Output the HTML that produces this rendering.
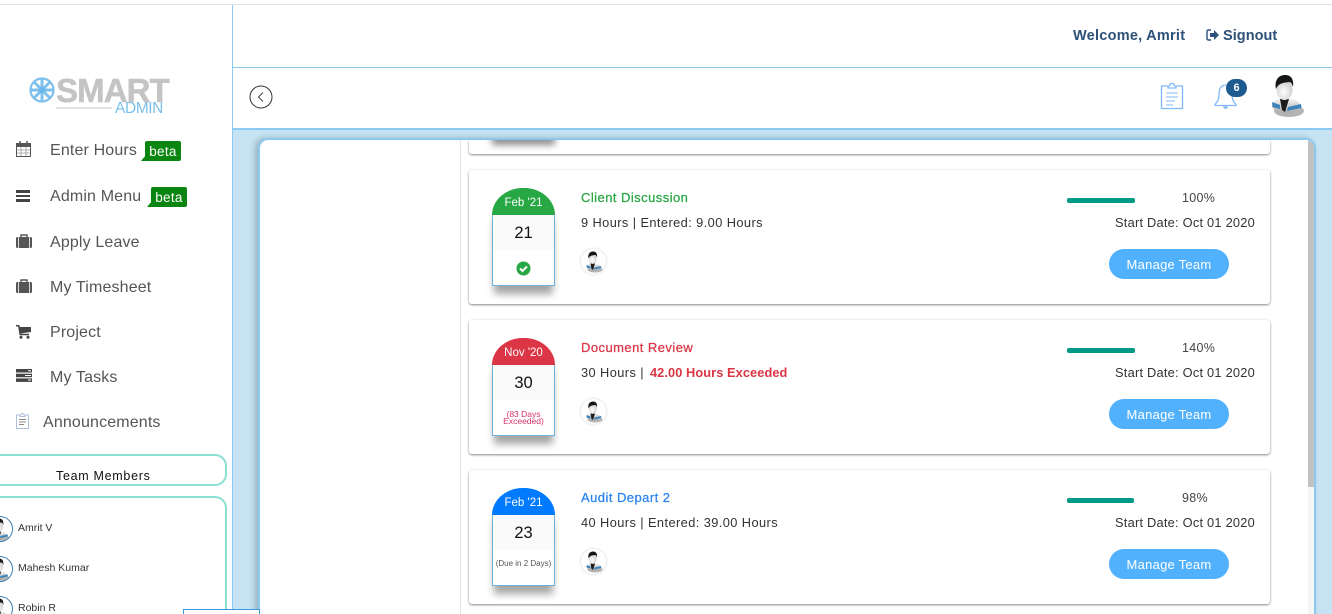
<!DOCTYPE html>
<html style="overflow:hidden"><head><meta charset="utf-8"><style>
html,body{margin:0;padding:0;background:#fff}
body{width:1332px;height:614px;overflow:hidden;position:relative;font-family:"Liberation Sans","DejaVu Sans",sans-serif;color:#333}
#w{position:absolute;left:0;top:0;width:1332px;height:614px;overflow:hidden}
.a,.t{position:absolute}
.t{white-space:nowrap;line-height:20px}
.m{font-size:16px;color:#555;letter-spacing:.15px}
.beta{position:absolute;background:#0a850f;color:#fff;font-size:13.500px;height:20px;line-height:21px;width:36px;box-sizing:border-box;border-radius:2px;text-align:center;letter-spacing:.3px}
.beta:before{content:"";position:absolute;left:-4px;bottom:0;border-style:solid;border-width:0 0 6px 5px;border-color:transparent transparent #0a850f transparent}
.card{position:absolute;left:469px;width:801px;height:134px;background:#fff;border-radius:3px;box-shadow:0 1px 2px rgba(0,0,0,.45),0 0 3px rgba(0,0,0,.06)}
.cal{position:absolute;left:23px;top:18px;width:63px;height:98px;background:#fff;border:1px solid #6db0dc;box-sizing:border-box;border-radius:31px 31px 0 0;box-shadow:0 10px 8px -2px rgba(0,0,0,.36)}
.cal .h{position:absolute;left:-1px;top:-1px;width:63px;height:27px;border-radius:31px 31px 0 0/27px 27px 0 0;color:#fff;font-size:11.500px;text-align:center;line-height:27px;padding-top:2px;box-sizing:border-box}
.cal .d{position:absolute;left:0;top:26px;width:61px;height:35px;background:#fafafa;text-align:center;font-size:16.500px;line-height:37px;color:#111}
.title{left:112px;top:18px;font-size:13px;letter-spacing:.45px;-webkit-text-stroke:.25px}
.sub{left:112px;top:43px;font-size:12.800px;color:#333;letter-spacing:.42px}
.bar{position:absolute;left:598px;top:28px;height:5px;background:#009a86;border-radius:2px}
.pct{left:713px;top:18px;font-size:12.500px;color:#444;letter-spacing:.3px}
.sd{right:15px;top:43px;font-size:12.800px;color:#333;letter-spacing:.24px}
.btn{position:absolute;left:640px;top:79px;width:120px;height:30px;border-radius:15px;background:#52b1fd;color:#fff;font-size:13px;text-align:center;line-height:31px;letter-spacing:.25px}
.av{position:absolute;left:112px;top:79px;width:25px;height:25px;border-radius:50%;background:#fff;box-shadow:0 0 3px rgba(0,0,0,.18)}
</style></head><body>
<svg width="0" height="0" style="position:absolute"><defs>
<linearGradient id="gb" x1="0" y1="0" x2="0" y2="1"><stop offset="0" stop-color="#fafafa"/><stop offset="1" stop-color="#a8a8a8"/></linearGradient>
<radialGradient id="gf" cx=".45" cy=".6" r=".7"><stop offset="0" stop-color="#ffffff"/><stop offset="1" stop-color="#c4c4c4"/></radialGradient>
<symbol id="u" viewBox="0 0 36 44"><ellipse cx="20" cy="37" rx="15" ry="6" fill="#b4b4b4"/><path d="M3 33C3 27 9 24 13 24H20C27 25 31 28 32 34 28 41 8 41 3 33Z" fill="url(#gb)"/><path d="M3 28 11 31V35L3.500 33ZM19 33 32 30 32.500 34 18 37Z" fill="#3b83ba"/><path d="M11 25H20L16 38 13 36Z" fill="#1c1c1c"/><ellipse cx="15.500" cy="16" rx="8" ry="10" fill="url(#gf)"/><path d="M7 15C5 6 10 1 16 1c6 0 9 4 8 12-1-3-2-5-4-5-4 1-10 0-13 7z" fill="#161616"/></symbol>
</defs></svg>
<div id="w">

<div class="a" style="left:0;top:4px;width:1332px;height:1px;background:#e2e2e2"></div>
<div class="a" style="left:232px;top:5px;width:1px;height:609px;background:#8cc9f0"></div>
<div class="a" style="left:233px;top:67px;width:1099px;height:1px;background:#8cc9f0"></div>
<div class="a" style="left:233px;top:128px;width:1099px;height:2px;background:#8cc9f0"></div>
<div class="a" style="left:233px;top:130px;width:1099px;height:484px;background:#c5e3f2"></div>

<div class="t" style="left:1073px;top:26px;font-size:14.500px;font-weight:bold;color:#2d5178;letter-spacing:.25px">Welcome, Amrit</div>
<svg class="a" style="left:1206px;top:29px" width="13" height="12" viewBox="0 0 13 12"><path d="M5 1H2.500Q1 1 1 2.500V9.500Q1 11 2.500 11H5" fill="none" stroke="#2d5178" stroke-width="1.400"/><path d="M4 4H8V1L13 6 8 11V8H4Z" fill="#2d5178"/></svg>
<div class="t" style="left:1223px;top:26px;font-size:14.500px;font-weight:bold;color:#2d5178;letter-spacing:.05px">Signout</div>

<svg class="a" style="left:249px;top:85px" width="24" height="24" viewBox="0 0 24 24"><circle cx="12" cy="12" r="11" fill="#fff" stroke="#333" stroke-width="1"/><path d="M14 7.500 9.500 12 14 16.500" fill="none" stroke="#444" stroke-width="1"/></svg>

<svg class="a" style="left:1160px;top:82px" width="24" height="28" viewBox="0 0 24 28" fill="none" stroke="#7fb8fc" stroke-width="1.300"><path d="M8 4H1.500V26.500H22.500V4H16"/><path d="M8 6V4.500Q10 4 10.500 1.500H13.500Q14 4 16 4.500V6Z"/><path d="M6 11H18M6 15H18M6 19H15M6 23H13" stroke-width="1"/></svg>
<svg class="a" style="left:1213px;top:82px" width="26" height="28" viewBox="0 0 26 28" fill="none" stroke="#7fb8fc" stroke-width="1.300"><path d="M13 3C7 3 6 8 6 13 6 18 4 20 2 22.500V23.500H23V22.500C20 20 19 17 19 10"/><path d="M10.500 24.500Q12.500 28 14.500 24.500" fill="#7fb8fc"/></svg>
<div class="a" style="left:1226px;top:79px;width:21px;height:18px;border-radius:10px;background:#1c5a8f;color:#fff;font-size:11px;font-weight:bold;text-align:center;line-height:18px">6</div>
<svg class="a" style="left:1269px;top:74px" width="36" height="44"><use href="#u"/></svg>

<!-- logo -->
<svg class="a" style="left:29px;top:77px" width="26" height="26" viewBox="0 0 26 26"><circle cx="13" cy="13" r="11.500" fill="none" stroke="#7ec0ec" stroke-width="2.200"/><g stroke="#7ec0ec" stroke-width="3"><path d="M13 1V25M1 13H25M4.500 4.500 21.500 21.500M21.500 4.500 4.500 21.500"/></g><circle cx="13" cy="13" r="3" fill="#69b6ea"/></svg>
<div class="t" style="left:56px;top:74px;font-size:33px;line-height:34px;font-weight:bold;color:#c4c4c4;letter-spacing:-.9px;-webkit-text-stroke:.5px #c4c4c4">SMART</div>
<div class="a" style="left:56px;top:107px;width:56px;height:2px;background:#e2e2e2"></div>
<div class="t" style="left:115px;top:99px;font-size:15.500px;color:#7cc0ea;letter-spacing:-.4px">ADMIN</div>

<!-- menu -->
<svg class="a" style="left:16px;top:141px" width="15" height="16" viewBox="0 0 15 16"><rect x=".5" y="2.500" width="14" height="13" fill="#fff" stroke="#555"/><rect x="0" y="2" width="15" height="4" fill="#555"/><path d="M5 6V15M10 6V15M1 9H14M1 12H14" stroke="#999" stroke-width=".8"/><path d="M4 0V3M11 0V3" stroke="#555" stroke-width="1.500"/></svg>
<div class="t m" style="left:50px;top:141px">Enter Hours</div>
<div class="beta" style="left:145px;top:141px">beta</div>

<div class="a" style="left:16px;top:190px;width:14px;height:2.500px;background:#444"></div>
<div class="a" style="left:16px;top:194.500px;width:14px;height:2.500px;background:#444"></div>
<div class="a" style="left:16px;top:199px;width:14px;height:2.500px;background:#444"></div>
<div class="t m" style="left:50px;top:187px">Admin Menu</div>
<div class="beta" style="left:151px;top:187px">beta</div>

<svg class="a" style="left:16px;top:234px" width="16" height="14" viewBox="0 0 16 14"><path d="M5 3V1H11V3" fill="none" stroke="#555" stroke-width="1.400"/><rect x="0" y="3" width="16" height="11" rx="1.500" fill="#555"/><path d="M2.500 3V14M13.500 3V14" stroke="#fff" stroke-width=".8"/></svg>
<div class="t m" style="left:50px;top:233px">Apply Leave</div>

<svg class="a" style="left:16px;top:279px" width="16" height="14" viewBox="0 0 16 14"><path d="M5 3V1H11V3" fill="none" stroke="#555" stroke-width="1.400"/><rect x="0" y="3" width="16" height="11" rx="1.500" fill="#555"/><path d="M2.500 3V14M13.500 3V14" stroke="#fff" stroke-width=".8"/></svg>
<div class="t m" style="left:50px;top:278px">My Timesheet</div>

<svg class="a" style="left:16px;top:325px" width="15" height="14" viewBox="0 0 15 14"><path d="M0 .8H2.800L4.200 9.500H13" fill="none" stroke="#444" stroke-width="1.500"/><path d="M3 2H15V7L4 8.500Z" fill="#444"/><circle cx="5" cy="12.300" r="1.500" fill="#444"/><circle cx="12" cy="12.300" r="1.500" fill="#444"/></svg>
<div class="t m" style="left:50px;top:323px">Project</div>

<svg class="a" style="left:16px;top:369px" width="16" height="13" viewBox="0 0 16 13"><rect width="16" height="3.500" fill="#444"/><rect y="4.700" width="16" height="3.500" fill="#444"/><rect y="9.400" width="16" height="3.500" fill="#444"/><path d="M12 1.700H15M9 6.500H15M12 11H15" stroke="#fff" stroke-width="1"/></svg>
<div class="t m" style="left:50px;top:368px">My Tasks</div>

<svg class="a" style="left:16px;top:413px" width="13" height="16" viewBox="0 0 13 16" fill="none" stroke="#aebfd8" stroke-width="1"><path d="M4 2H.5V15.500H12.500V2H9"/><path d="M4 3.500V2Q5.500 2 6 .5H7Q7.500 2 9 2V3.500Z"/><path d="M3 6.500H10M3 9H10M3 11.500H8" stroke="#888"/></svg>
<div class="t m" style="left:43px;top:413px">Announcements</div>

<div class="a" style="left:-20px;top:454px;width:247px;height:32px;border:2px solid #8be0d3;box-sizing:border-box;border-radius:12px"></div>
<div class="t" style="left:56px;top:466px;font-size:12.500px;color:#111;letter-spacing:.7px">Team Members</div>
<div class="a" style="left:-20px;top:496px;width:247px;height:140px;border:2px solid #8be0d3;border-bottom:0;box-sizing:border-box;border-radius:12px 12px 0 0"></div>

<div class="a" style="left:-13px;top:516px;width:24px;height:24px;border-radius:50%;border:1px solid #3c7fb4;overflow:hidden;background:#fff"><svg style="position:absolute;left:2px;top:1px" width="20" height="24"><use href="#u"/></svg></div>
<div class="t" style="left:18px;top:518px;font-size:10.500px;color:#333">Amrit V</div>
<div class="a" style="left:-13px;top:556px;width:24px;height:24px;border-radius:50%;border:1px solid #3c7fb4;overflow:hidden;background:#fff"><svg style="position:absolute;left:2px;top:1px" width="20" height="24"><use href="#u"/></svg></div>
<div class="t" style="left:18px;top:558px;font-size:10.500px;color:#333">Mahesh Kumar</div>
<div class="a" style="left:-13px;top:596px;width:24px;height:24px;border-radius:50%;border:1px solid #3c7fb4;overflow:hidden;background:#fff"><svg style="position:absolute;left:2px;top:1px" width="20" height="24"><use href="#u"/></svg></div>
<div class="t" style="left:18px;top:598px;font-size:10.500px;color:#333">Robin R</div>

<!-- panel -->
<div class="a" style="left:258px;top:138px;width:1058px;height:490px;background:#fff;border:2px solid #8cc9f0;box-sizing:border-box;border-radius:10px;box-shadow:-3px 0 6px rgba(0,0,0,.22);overflow:hidden">
<div class="a" style="left:200px;top:0;width:1px;height:490px;background:#e4e4e4"></div>
<div class="a" style="left:1048px;top:0;width:6px;height:347px;background:#c1c1c1"></div>
<div class="a" style="left:1048px;top:347px;width:6px;height:140px;background:#f5f5f5"></div>
</div>

<!-- partial top card -->
<div class="a" style="left:469px;top:140px;width:801px;height:14px;background:#fff;border-radius:0 0 3px 3px;box-shadow:0 1px 2px rgba(0,0,0,.45);overflow:visible">
<div class="a" style="left:0;top:0;width:801px;height:14px;overflow:hidden"><div class="a" style="left:23px;top:-10px;width:63px;height:10px;box-shadow:0 5px 7px 0 rgba(0,0,0,.45)"></div></div>
</div>

<!-- card 1 -->
<div class="card" style="top:170px">
<div class="cal"><div class="h" style="background:#28a745">Feb '21</div><div class="d">21</div>
<svg class="a" style="left:23px;top:72px" width="15" height="15" viewBox="0 0 15 15"><circle cx="7.500" cy="7.500" r="7" fill="#28a745"/><path d="M4 7.500 6.500 10 11 5.500" fill="none" stroke="#fff" stroke-width="2"/></svg></div>
<div class="t title" style="color:#28a745">Client Discussion</div>
<div class="t sub">9 Hours | Entered: 9.00 Hours</div>
<div class="av"><svg style="position:absolute;left:4px;top:2px" width="18" height="22"><use href="#u"/></svg></div>
<div class="bar" style="width:68px"></div><div class="t pct">100%</div><div class="t sd">Start Date: Oct 01 2020</div><div class="btn">Manage Team</div>
</div>

<!-- card 2 -->
<div class="card" style="top:320px">
<div class="cal"><div class="h" style="background:#dc3545">Nov '20</div><div class="d">30</div>
<div class="a" style="left:0;top:72px;width:61px;text-align:center;font-size:8.500px;line-height:7px;color:#d6336c">(83 Days<br>Exceeded)</div></div>
<div class="t title" style="color:#dc3545">Document Review</div>
<div class="t sub">30 Hours | <span style="color:#dc3545;font-weight:bold;letter-spacing:.08px;margin-left:2px">42.00 Hours Exceeded</span></div>
<div class="av"><svg style="position:absolute;left:4px;top:2px" width="18" height="22"><use href="#u"/></svg></div>
<div class="bar" style="width:68px"></div><div class="t pct">140%</div><div class="t sd">Start Date: Oct 01 2020</div><div class="btn">Manage Team</div>
</div>

<!-- card 3 -->
<div class="card" style="top:470px">
<div class="cal"><div class="h" style="background:#007bff">Feb '21</div><div class="d">23</div>
<div class="a" style="left:0;top:69px;width:61px;text-align:center;font-size:8px;line-height:12px;color:#555;white-space:nowrap">(Due in 2 Days)</div></div>
<div class="t title" style="color:#2b84f0">Audit Depart 2</div>
<div class="t sub">40 Hours | Entered: 39.00 Hours</div>
<div class="av"><svg style="position:absolute;left:4px;top:2px" width="18" height="22"><use href="#u"/></svg></div>
<div class="bar" style="width:67px"></div><div class="t pct">98%</div><div class="t sd">Start Date: Oct 01 2020</div><div class="btn">Manage Team</div>
</div>

<div class="a" style="left:183px;top:609px;width:77px;height:5px;background:#fff;border:1px solid #3a9ad9;border-bottom:0;box-sizing:border-box"></div>
</div>
</body></html>
